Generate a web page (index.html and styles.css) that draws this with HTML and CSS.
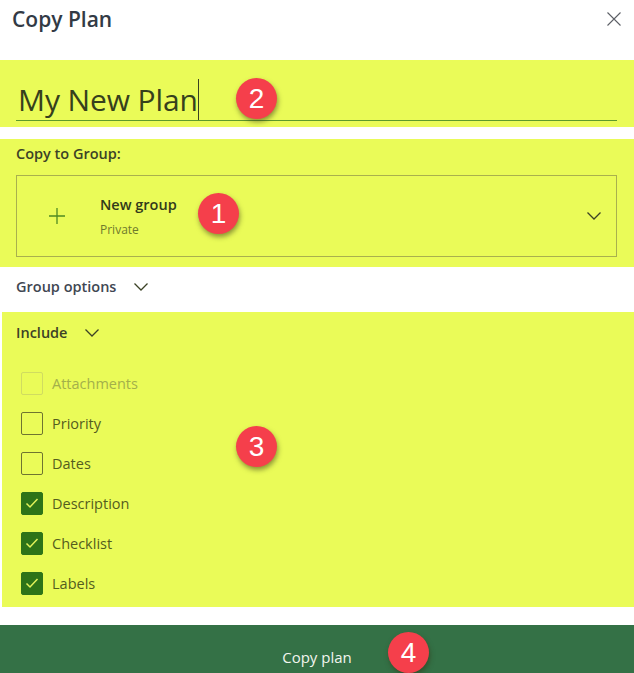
FILE: index.html
```html
<!DOCTYPE html>
<html lang="en">
<head>
  <meta charset="UTF-8">
  <meta name="viewport" content="width=device-width, initial-scale=1.0">
  <title>Copy Plan</title>
  <link rel="stylesheet" href="styles.css">
</head>
<body>
  <div class="panel">
    <header class="header">
      <h1 class="title">Copy Plan</h1>
      <svg class="close" width="14" height="14" viewBox="0 0 14 14"><path d="M0.500 0.500l13 13M13.500 0.500l-13 13"/></svg>
    </header>

    <section class="name-section hl">
      <div class="name-field"><span class="name-text">My New Plan</span><span class="caret"></span></div>
      <span class="badge badge-2">2</span>
    </section>

    <section class="group-section hl">
      <div class="label">Copy to Group:</div>
      <div class="group-select">
        <svg class="plus" width="18" height="18" viewBox="0 0 18 18"><path d="M9 1v16M1 9h16"/></svg>
        <div class="group-text">
          <div class="group-name">New group</div>
          <div class="group-sub">Private</div>
        </div>
        <svg class="chevron chevron-select" width="16" height="10" viewBox="0 0 16 10"><path d="M1.500 1.500L8 8l6.500-6.500"/></svg>
      </div>
      <span class="badge badge-1">1</span>
    </section>

    <div class="options-row">
      <span class="label">Group options</span>
      <svg class="chevron" width="16" height="10" viewBox="0 0 16 10"><path d="M1.500 1.500L8 8l6.500-6.500"/></svg>
    </div>

    <section class="include-section hl">
      <div class="include-head">
        <span class="label">Include</span>
        <svg class="chevron" width="16" height="10" viewBox="0 0 16 10"><path d="M1.500 1.500L8 8l6.500-6.500"/></svg>
      </div>
      <ul class="check-list">
        <li class="check-item disabled"><span class="box"></span>Attachments</li>
        <li class="check-item"><span class="box"></span>Priority</li>
        <li class="check-item"><span class="box"></span>Dates</li>
        <li class="check-item"><span class="box checked"><svg width="14" height="14" viewBox="0 0 14 14"><path d="M1.500 7.500l3.500 3.500 7.500-8"/></svg></span>Description</li>
        <li class="check-item"><span class="box checked"><svg width="14" height="14" viewBox="0 0 14 14"><path d="M1.500 7.500l3.500 3.500 7.500-8"/></svg></span>Checklist</li>
        <li class="check-item"><span class="box checked"><svg width="14" height="14" viewBox="0 0 14 14"><path d="M1.500 7.500l3.500 3.500 7.500-8"/></svg></span>Labels</li>
      </ul>
      <span class="badge badge-3">3</span>
    </section>

    <div class="copy-button">
      Copy plan
      <span class="badge badge-4">4</span>
    </div>
  </div>
</body>
</html>
```

FILE: styles.css
```css
* {
  margin: 0;
  padding: 0;
  box-sizing: border-box;
}

body {
  font-family: 'Open Sans', 'Noto Sans', sans-serif;
  background: #fff;
  color: #323130;
}

.panel {
  position: relative;
  display: flex;
  flex-direction: column;
  width: 634px;
  height: 673px;
  overflow: hidden;
}

.hl {
  background: #eafb58;
}

.header {
  display: flex;
  justify-content: space-between;
  align-items: center;
  height: 60px;
  padding: 0 13px 22px 12px;
}

.title {
  font-size: 21px;
  font-weight: 600;
  color: #323a45;
}

.close path {
  fill: none;
  stroke: #5c5f66;
  stroke-width: 1.1;
}

.name-section {
  height: 67px;
  padding: 0 17px 0 16px;
}

.name-field {
  display: flex;
  align-items: flex-end;
  height: 61px;
  border-bottom: 1px solid #5d9a2c;
}

.name-text {
  font-size: 30px;
  line-height: 40px;
  letter-spacing: -0.1px;
  padding-left: 2px;
  color: #36401c;
}

.caret {
  width: 1px;
  height: 41px;
  background: #3a4220;
}

.group-section {
  height: 128px;
  margin-top: 12px;
  padding: 5px 17px 0 16px;
}

.label {
  font-size: 14.500px;
  font-weight: 600;
  line-height: 20px;
  color: #3c4226;
}

.group-select {
  display: flex;
  align-items: center;
  height: 82px;
  margin-top: 11px;
  border: 1px solid #a9b04d;
}

.plus {
  margin-left: 31px;
}

.plus path {
  fill: none;
  stroke: #4f8a22;
  stroke-width: 1.3;
}

.group-text {
  margin-left: 34px;
}

.group-name {
  font-size: 14.500px;
  font-weight: 600;
  line-height: 20px;
  color: #323a1a;
}

.group-sub {
  margin-top: 7px;
  font-size: 12px;
  line-height: 16px;
  color: #6f7a2c;
}

.chevron path {
  fill: none;
  stroke: #3c4226;
  stroke-width: 1.3;
}

.chevron-select {
  margin-left: auto;
  margin-right: 14px;
}

.options-row {
  display: flex;
  align-items: center;
  gap: 17px;
  height: 45px;
  padding: 0 0 6px 16px;
}

.options-row .label {
  color: #3f4752;
}

.include-section {
  height: 295px;
  margin-left: 2px;
  padding: 11px 0 0 14px;
}

.include-head {
  display: flex;
  align-items: center;
  gap: 17px;
  height: 20px;
}

.check-list {
  list-style: none;
  margin-top: 20px;
}

.check-item {
  display: flex;
  align-items: center;
  gap: 9px;
  height: 40px;
  padding-left: 5px;
  font-size: 14.500px;
  color: #545d1e;
}

.box {
  display: flex;
  align-items: center;
  justify-content: center;
  width: 22px;
  height: 23px;
  border: 1px solid #6f7430;
  border-radius: 2px;
}

.box.checked {
  background: #2e7418;
  border-color: #2e7418;
}

.box path {
  fill: none;
  stroke: #e3f25a;
  stroke-width: 1.5;
}

.disabled {
  color: #a3b04a;
}

.disabled .box {
  border-color: #d0dc60;
}

.copy-button {
  display: flex;
  align-items: center;
  justify-content: center;
  height: 48px;
  margin-top: 18px;
  padding-top: 16px;
  background: #347146;
  color: #f2f5ee;
  font-size: 15px;
}

.badge {
  position: absolute;
  width: 41px;
  height: 41px;
  border-radius: 50%;
  background: #f53f4b;
  box-shadow: 1px 3px 5px rgba(50, 50, 20, 0.5);
  color: #fff;
  font-family: 'Liberation Sans', sans-serif;
  font-size: 28px;
  line-height: 41px;
  text-align: center;
}

.badge-1 { left: 198px; top: 193px; }
.badge-2 { left: 236px; top: 78px; }
.badge-3 { left: 236px; top: 426px; }
.badge-4 { left: 388px; top: 632px; }
```
